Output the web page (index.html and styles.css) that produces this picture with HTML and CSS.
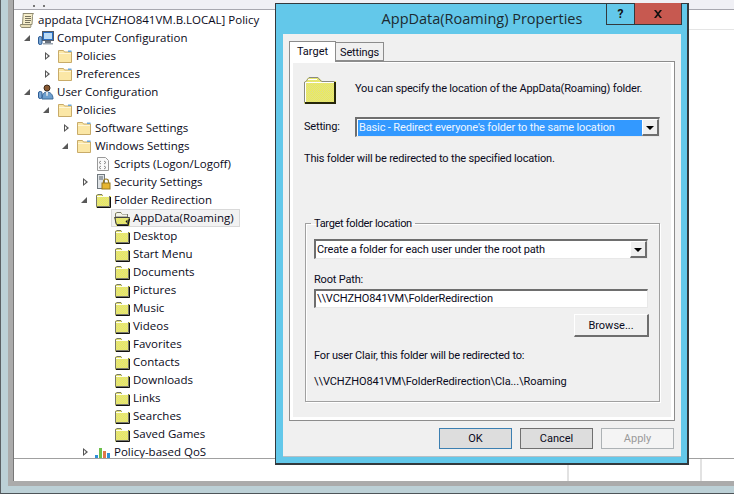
FILE: index.html
```html
<!DOCTYPE html>
<html lang="en">
<head>
<meta charset="utf-8">
<title>AppData(Roaming) Properties</title>
<link rel="stylesheet" href="styles.css">
</head>
<body>
<svg class="defs" width="0" height="0" aria-hidden="true">
  <defs>
    <symbol id="manila" viewBox="0 0 16 16">
      <path d="M1.500 14.500V2.500h5l1 1.500h7v10.500z" fill="#fbe7a6" stroke="#c8ab69"/>
      <path d="M2 5.500h12" stroke="#fff6d6"/>
      <path d="M11 2.500h3.500v1.500H11z" fill="#6ba6d8"/>
    </symbol>
    <symbol id="redir" viewBox="0 0 16 16">
      <path d="M1.500 14.500V3.500L3 2.500h4l1 1.500h6.500v10.500z" fill="none" stroke="#77776a"/>
      <path d="M2 4.500h12" stroke="#fffff0"/>
      <path d="M2 15.500h13.500V5" fill="none" stroke="#111"/>
    </symbol>
    <symbol id="redir-open" viewBox="0 0 16 16">
      <path d="M1.500 13.500V3.500L3 2.500h4l1 1.500h5.500v3H1.500z" fill="#f4f4e8" stroke="#77776a"/>
      <path d="M.500 7.500h15l-2 7H2.500z" fill="none" stroke="#444"/>
      <path d="M3 15.500h11L15.500 9" fill="none" stroke="#111" stroke-width="1.200"/>
      <path d="M11.500 11.500l2-2v4z" fill="#111"/>
    </symbol>
  </defs>
</svg>

<div class="window">
  <div class="frame">
    <div class="client">
      <div class="strip"><i class="dot"></i><i class="dot"></i></div>
      <div class="tree">
        <div class="row l0"><span class="arrow"></span>
          <svg class="ic" viewBox="0 0 16 16"><path d="M4 1.500h10.500c-1 1-1.200 2-1 3l-.5 8H3.500l.5-8c0-1 .5-2 0-3z" fill="#f6eeca" stroke="#8f8a70"/><path d="M1.500 12.500h10c.5 1 .5 2 0 3h-9c-1-1-1.500-2-1-3z" fill="#e8dfb8" stroke="#8f8a70"/><path d="M6 4.500h6M6 6.500h6M6 8.500h6M6 10.500h5" stroke="#77735e"/></svg>
          <span class="label">appdata [VCHZHO841VM.B.LOCAL] Policy</span></div>
        <div class="row l1"><span class="arrow open"></span>
          <svg class="ic" viewBox="0 0 16 16"><rect x="4.500" y="1.500" width="11" height="9" fill="#2a6fc4" stroke="#555c66"/><rect x="6" y="3" width="8" height="6" fill="#bcdcf6"/><rect x="7" y="11" width="6" height="2" fill="#6b7480"/><rect x="5" y="13" width="10" height="1.500" fill="#9aa4ae"/><rect x=".500" y="6.500" width="3.500" height="8" rx="1.500" fill="#7aa6d2" stroke="#2c5c96"/></svg>
          <span class="label">Computer Configuration</span></div>
        <div class="row l2"><span class="arrow closed"></span><svg class="ic"><use href="#manila"/></svg><span class="label">Policies</span></div>
        <div class="row l2"><span class="arrow closed"></span><svg class="ic"><use href="#manila"/></svg><span class="label">Preferences</span></div>
        <div class="row l1"><span class="arrow open"></span>
          <svg class="ic" viewBox="0 0 16 16"><circle cx="9" cy="4" r="3" fill="#8a5a32" stroke="#3c2a1c"/><path d="M4 15c0-5 2-7 5-7s6 2 6 7z" fill="#6d9fce" stroke="#3d6a98"/><path d="M8 8h2l-.5 4h-1z" fill="#eee"/><rect x=".500" y="7.500" width="3.500" height="7" rx="1.500" fill="#7aa6d2" stroke="#2c5c96"/></svg>
          <span class="label">User Configuration</span></div>
        <div class="row l2"><span class="arrow open"></span><svg class="ic"><use href="#manila"/></svg><span class="label">Policies</span></div>
        <div class="row l3"><span class="arrow closed"></span><svg class="ic"><use href="#manila"/></svg><span class="label">Software Settings</span></div>
        <div class="row l3"><span class="arrow open"></span><svg class="ic"><use href="#manila"/></svg><span class="label">Windows Settings</span></div>
        <div class="row l4"><span class="arrow"></span>
          <svg class="ic" viewBox="0 0 16 16"><path d="M2.500 1.500h8l3 3v10h-11z" fill="#fafafa" stroke="#9a9a9a"/><path d="M6 5l-2 1.500L6 8M9 5l2 1.500L9 8M6 10l-2 1.500L6 13M9 10l2 1.500L9 13" fill="none" stroke="#8a8a8a"/></svg>
          <span class="label">Scripts (Logon/Logoff)</span></div>
        <div class="row l4"><span class="arrow closed"></span>
          <svg class="ic" viewBox="0 0 16 16"><rect x="2.500" y=".500" width="7" height="14" fill="#dfe3e6" stroke="#70787e"/><path d="M4 3h4M4 5h4" stroke="#59626a"/><path d="M8.500 9V7.500a2.500 2.500 0 0 1 5 0V9" fill="none" stroke="#9a7a20" stroke-width="1.200"/><rect x="7" y="9" width="8" height="6" fill="#e6b531" stroke="#9a7a20"/></svg>
          <span class="label">Security Settings</span></div>
        <div class="row l4"><span class="arrow open"></span><svg class="ic df"><use href="#redir"/></svg><span class="label">Folder Redirection</span></div>
        <div class="row l5"><span class="arrow"></span><span class="selected"><svg class="ic df-open"><use href="#redir-open"/></svg><span class="label">AppData(Roaming)</span></span></div>
        <div class="row l5"><span class="arrow"></span><svg class="ic df"><use href="#redir"/></svg><span class="label">Desktop</span></div>
        <div class="row l5"><span class="arrow"></span><svg class="ic df"><use href="#redir"/></svg><span class="label">Start Menu</span></div>
        <div class="row l5"><span class="arrow"></span><svg class="ic df"><use href="#redir"/></svg><span class="label">Documents</span></div>
        <div class="row l5"><span class="arrow"></span><svg class="ic df"><use href="#redir"/></svg><span class="label">Pictures</span></div>
        <div class="row l5"><span class="arrow"></span><svg class="ic df"><use href="#redir"/></svg><span class="label">Music</span></div>
        <div class="row l5"><span class="arrow"></span><svg class="ic df"><use href="#redir"/></svg><span class="label">Videos</span></div>
        <div class="row l5"><span class="arrow"></span><svg class="ic df"><use href="#redir"/></svg><span class="label">Favorites</span></div>
        <div class="row l5"><span class="arrow"></span><svg class="ic df"><use href="#redir"/></svg><span class="label">Contacts</span></div>
        <div class="row l5"><span class="arrow"></span><svg class="ic df"><use href="#redir"/></svg><span class="label">Downloads</span></div>
        <div class="row l5"><span class="arrow"></span><svg class="ic df"><use href="#redir"/></svg><span class="label">Links</span></div>
        <div class="row l5"><span class="arrow"></span><svg class="ic df"><use href="#redir"/></svg><span class="label">Searches</span></div>
        <div class="row l5"><span class="arrow"></span><svg class="ic df"><use href="#redir"/></svg><span class="label">Saved Games</span></div>
        <div class="row l4"><span class="arrow closed"></span>
          <svg class="ic" viewBox="0 0 16 16"><rect x="0" y="11" width="3" height="5" fill="#2f8fd8"/><rect x="4" y="4" width="3" height="12" fill="#6cc04a"/><rect x="8" y="7" width="3" height="9" fill="#e0784a"/><rect x="12" y="9" width="3" height="7" fill="#2f8fd8"/></svg>
          <span class="label">Policy-based QoS</span></div>
      </div>
      <div class="status">
        <div class="cell wide"></div>
        <div class="cell mid"></div>
        <div class="cell"></div>
      </div>
    </div>
  </div>
</div>

<section class="dialog">
  <header class="titlebar">
    <h1 class="title">AppData(Roaming) Properties</h1>
    <div class="caption">
      <span class="cap help">?</span>
      <span class="cap close">
        <svg viewBox="0 0 10 8" width="10" height="8"><path d="M1 0h2l2 2.500L7 0h2L6 4l3 4H7L5 5.500 3 8H1l3-4z" fill="#111"/></svg>
      </span>
    </div>
  </header>
  <div class="body">
    <div class="tabs">
      <span class="tab active">Target</span>
      <span class="tab">Settings</span>
    </div>
    <div class="panel">
      <div class="page">
        <div class="intro">
          <svg class="bigfolder" viewBox="0 0 32 27"><path d="M.500 25.500V5l2-1 1-2 1.500-1.500h9L16 3l2 1.500h12.500" fill="none" stroke="#8a8a80"/><path d="M1.500 25V5.500h29M4 2.500h9" fill="none" stroke="#fff"/><path d="M1 26h30V5" fill="none" stroke="#26260a" stroke-width="2"/></svg>
          <p class="txt">You can specify the location of the AppData(Roaming) folder.</p>
        </div>
        <div class="setting">
          <span class="txt setting-label">Setting:</span>
          <div class="combo first">
            <span class="value sel">Basic - Redirect everyone's folder to the same location</span>
            <span class="drop"></span>
          </div>
        </div>
        <p class="txt note">This folder will be redirected to the specified location.</p>
        <fieldset class="group">
          <legend class="txt legend">Target folder location</legend>
          <div class="combo">
            <span class="value">Create a folder for each user under the root path</span>
            <span class="drop"></span>
          </div>
          <p class="txt root-label">Root Path:</p>
          <div class="input txt">\\VCHZHO841VM\FolderRedirection</div>
          <div class="browse-row"><span class="btn browse">Browse...</span></div>
          <p class="txt for-user">For user Clair, this folder will be redirected to:</p>
          <p class="txt path">\\VCHZHO841VM\FolderRedirection\Cla...\Roaming</p>
        </fieldset>
      </div>
    </div>
    <div class="actions">
      <span class="btn ok">OK</span>
      <span class="btn cancel">Cancel</span>
      <span class="btn apply">Apply</span>
    </div>
  </div>
</section>
</body>
</html>
```
FILE: styles.css
```css
* { box-sizing: border-box; }
html, body { margin: 0; padding: 0; }
body {
  width: 734px;
  height: 494px;
  overflow: hidden;
  position: relative;
  font-family: "Open Sans", "Noto Sans", sans-serif;
  font-size: 11.5px;
  color: #111;
  background: #fff;
}
.defs { position: absolute; }

/* background MMC window */
.window {
  width: 734px;
  height: 494px;
  background: #bcd0d6;
  border-left: 1px solid #5a5f63;
  border-bottom: 1px solid #4d5458;
  padding: 0 0 7px 7px;
}
.frame {
  height: 100%;
  background: #ababab;
  padding: 0 0 5px 5px;
}
.client {
  height: 100%;
  background: #fff;
  border-left: 1px solid #777;
  display: flex;
  flex-direction: column;
}
.strip {
  height: 10px;
  flex: none;
  background: #f0f0f5;
  border-bottom: 1px solid #a8a8b0;
  display: flex;
  gap: 8px;
  padding: 5px 0 0 19px;
}
.dot { width: 2px; height: 2px; background: #777; }
.tree {
  height: 449px;
  flex: none;
  overflow: hidden;
  padding-top: 1px;
  background: #fff;
  border-bottom: 1px solid #a0a0a0;
  background-image: linear-gradient(#e5e5e5, #e5e5e5);
  background-size: 100% 1px;
  background-position: 0 19px;
  background-repeat: no-repeat;
}
.status { flex: 1; display: flex; }
.cell { flex: 1; }
.wide { flex: none; width: 555px; border-right: 2px solid #e2e2e2; }
.mid { flex: none; width: 133px; border-right: 2px solid #e2e2e2; }

/* tree */
.row {
  width: 262px;
  height: 18px;
  display: flex;
  align-items: center;
  white-space: nowrap;
  background: #fff;
}
.l0 { padding-left: 5px; }
.l1 { padding-left: 24px; }
.l2 { padding-left: 43px; }
.l3 { padding-left: 62px; }
.l4 { padding-left: 81px; }
.l5 { padding-left: 100px; }
.arrow { width: 0; height: 18px; flex: none; position: relative; }
.closed::after {
  content: "";
  position: absolute;
  left: -12px;
  top: 5px;
  width: 0;
  height: 0;
  border-left: 5px solid #555;
  border-top: 4px solid transparent;
  border-bottom: 4px solid transparent;
}
.closed::before {
  content: "";
  position: absolute;
  left: -11px;
  top: 7px;
  z-index: 1;
  width: 0;
  height: 0;
  border-left: 2.500px solid #fff;
  border-top: 2px solid transparent;
  border-bottom: 2px solid transparent;
}
.open::after {
  content: "";
  position: absolute;
  left: -14px;
  top: 6px;
  width: 0;
  height: 0;
  border-right: 6px solid #595959;
  border-top: 6px solid transparent;
}
.ic { width: 16px; height: 16px; flex: none; margin-right: 3px; }
.df, .df-open, .bigfolder {
  background: repeating-conic-gradient(#f0f050 0 25%, #dcdc90 0 50%) 0 0 / 2px 2px;
}
.df { clip-path: polygon(1px 16px, 1px 3px, 3px 2px, 7px 2px, 8px 4px, 16px 4px, 16px 16px); }
.df-open { clip-path: polygon(1px 3px, 3px 2px, 7px 2px, 8px 4px, 14px 4px, 14px 7px, 16px 7px, 16px 16px, 2px 16px, 0 7px, 1px 7px); }
.label { line-height: 18px; color: #0a0a20; }
.selected {
  display: flex;
  align-items: center;
  width: 129px;
  height: 18px;
  margin-left: -3px;
  padding-left: 2px;
  background: #f2f2f2;
  border: 1px solid #d9d9d9;
}
.selected .label { line-height: 16px; }

/* dialog */
.dialog {
  position: absolute;
  left: 275px;
  top: 3px;
  width: 414px;
  height: 462px;
  background: #63c8ea;
  border: 1px solid #33393d;
  border-right-width: 2px;
  border-bottom-width: 2px;
  padding: 0 6px 6px 7px;
  display: flex;
  flex-direction: column;
  font-family: Roboto, "Open Sans", sans-serif;
  font-size: 11px;
}
.titlebar { height: 30px; flex: none; position: relative; }
.title {
  margin: 0;
  padding-top: 5px;
  font-family: "Open Sans", sans-serif;
  font-size: 14.500px;
  font-weight: 400;
  line-height: 20px;
  text-align: center;
  color: #1c2a30;
}
.caption {
  position: absolute;
  right: -1px;
  top: -1px;
  display: flex;
  border: 1px solid #33393d;
  border-top: none;
  height: 22px;
}
.cap { display: flex; align-items: center; justify-content: center; font-weight: 700; }
.help { width: 28px; font-size: 12px; border-right: 1px solid #33393d; color: #111; }
.close { width: 46px; background: #c75950; }
.body {
  flex: 1;
  background: #f0f0f0;
  border-bottom: 1px solid #b5c0c6;
  padding: 7px 6px 0;
  display: flex;
  flex-direction: column;
}
.tabs { display: flex; height: 21px; flex: none; align-items: flex-end; position: relative; z-index: 1; }
.tab {
  height: 19px;
  padding: 0 3px;
  width: 48px;
  margin-bottom: 1px;
  background: #f0f0f0;
  border: 1px solid #8c8c8c;
  border-left: none;
  text-align: center;
  line-height: 20px;
  letter-spacing: -.15px;
  color: #0a0a20;
}
.tab.active {
  height: 21px;
  width: 47px;
  margin-bottom: 0;
  background: #fff;
  border: 1px solid #8c8c8c;
  border-bottom: none;
  line-height: 20px;
  letter-spacing: 0;
}
.panel {
  height: 360px;
  flex: none;
  margin-top: -1px;
  width: 386px;
  border: 1px solid #8c8c8c;
  background: #fff;
  padding: 1px 3px 3px;
}
.page { height: 100%; background: #f0f0f0; padding: 14px 0 0 11px; }
.txt { margin: 0; line-height: 16px; color: #0a0a20; white-space: nowrap; letter-spacing: -.18px; }
.intro { display: flex; align-items: flex-start; }
.bigfolder {
  width: 32px;
  height: 27px;
  flex: none;
  margin-right: 19px;
  clip-path: polygon(0 27px, 0 5px, 2px 4px, 3px 2px, 5px 0, 14px 0, 16px 2px, 18px 4px, 32px 4px, 32px 27px);
}
.intro .txt { margin-top: 4px; }
.setting { display: flex; align-items: center; margin-top: 13px; }
.setting-label { width: 51px; flex: none; }
.combo {
  display: flex;
  height: 20px;
  border-top: 2px solid #6e6e6e;
  border-left: 2px solid #6e6e6e;
  border-bottom: 1px solid #e8e8e8;
  border-right: 1px solid #e8e8e8;
  background: #fff;
  align-items: stretch;
}
.combo.first { width: 305px; }
.value { flex: 1; padding-left: 1px; line-height: 17px; color: #0a0a20; white-space: nowrap; overflow: hidden; letter-spacing: -.14px; }
.sel { margin: 1px 0 0 1px; background: #3399ff; color: #eef6ff; line-height: 15px; }
.drop {
  width: 17px;
  flex: none;
  background: #efefef;
  border-right: 2px solid #6e6e6e;
  border-bottom: 2px solid #6e6e6e;
  border-top: 1px solid #fff;
  border-left: 1px solid #fff;
  position: relative;
}
.drop::after {
  content: "";
  position: absolute;
  left: 3px;
  top: 6px;
  width: 0;
  height: 0;
  border-top: 4px solid #000;
  border-left: 4px solid transparent;
  border-right: 4px solid transparent;
}
.note { margin-top: 14px; }
.group {
  margin: 47px 0 0 1px;
  padding: 7px 11px 0 8px;
  width: 355px;
  height: 188px;
  border: 1px solid #a0a0a0;
  box-shadow: 1px 1px 0 #fff, inset 1px 1px 0 #fff;
}
.legend { padding: 2px 3px 0; margin-left: -3px; letter-spacing: -.3px; }
.root-label { margin-top: 13px; }
.input {
  margin-top: 1px;
  height: 19px;
  padding-left: 1px;
  background: #fff;
  border-top: 2px solid #6e6e6e;
  border-left: 2px solid #6e6e6e;
  border-bottom: 1px solid #e8e8e8;
  border-right: 1px solid #e8e8e8;
  line-height: 15px;
  letter-spacing: -.09px;
}
.browse-row { display: flex; justify-content: flex-end; margin: 6px -1px 0 0; }
.btn {
  display: block;
  height: 21px;
  text-align: center;
  line-height: 19px;
  color: #0a0a20;
}
.browse {
  width: 75px;
  height: 23px;
  line-height: 22px;
  background: #f0f0f0;
  border: 1px solid #fff;
  border-right: 2px solid #6e6e6e;
  border-bottom: 2px solid #6e6e6e;
}
.for-user { margin-top: 11px; }
.path { margin-top: 10px; letter-spacing: -.07px; }
.actions { display: flex; gap: 8px; margin: 7px 0 0 150px; }
.actions .btn { width: 73px; }
.ok { background: #dddddd; border: 1px solid #3c7fb1; }
.cancel { background: #dddddd; border: 1px solid #707070; }
.apply { background: #f4f4f4; border: 1px solid #adb2b5; color: #9a9a9a !important; }
```
